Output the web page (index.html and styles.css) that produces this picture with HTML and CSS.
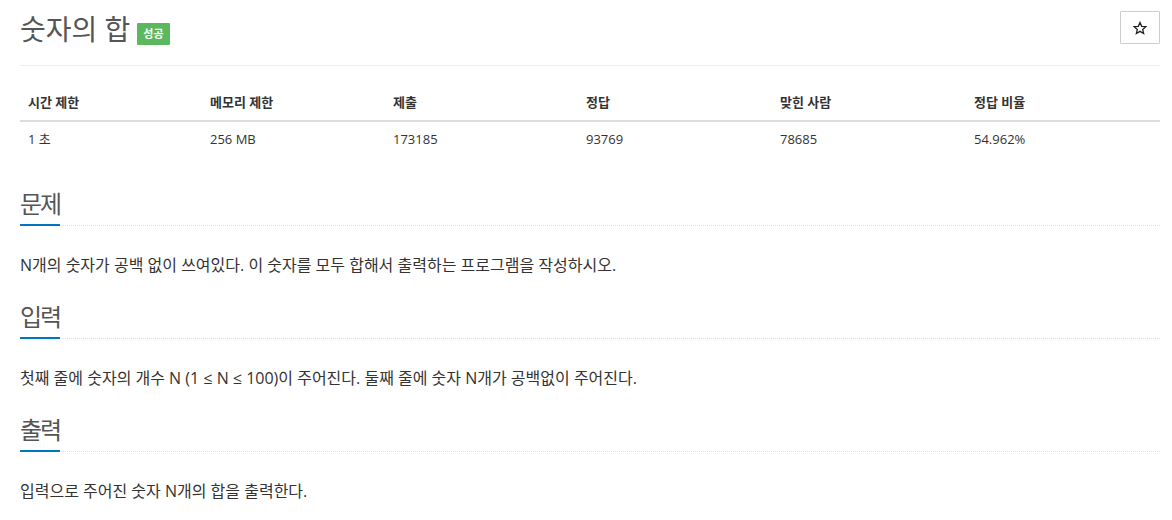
FILE: index.html
```html
<!DOCTYPE html>
<html lang="ko">
<head>
<meta charset="utf-8">
<title>숫자의 합</title>
<link rel="stylesheet" href="styles.css">
</head>
<body>
<div class="page">
  <div class="page-header">
    <h1 class="title">숫자의 합 <span class="label">성공</span></h1>
    <button class="star-btn" type="button" aria-label="즐겨찾기">
      <svg class="star-icon" width="14" height="14" viewBox="0 0 24 24"><path d="M12 2.5l2.9 6.6 7.1.6-5.4 4.7 1.6 7-6.2-3.7-6.2 3.7 1.6-7L2 9.7l7.1-.6z" fill="none" stroke="#222" stroke-width="2.2" stroke-linejoin="miter"/></svg>
    </button>
  </div>
  <table class="info">
    <colgroup>
      <col class="c1"><col class="c2"><col class="c3"><col class="c4"><col class="c5"><col class="c6">
    </colgroup>
    <thead>
      <tr><th>시간 제한</th><th>메모리 제한</th><th>제출</th><th>정답</th><th>맞힌 사람</th><th>정답 비율</th></tr>
    </thead>
    <tbody>
      <tr><td>1 초</td><td>256 MB</td><td>173185</td><td>93769</td><td>78685</td><td>54.962%</td></tr>
    </tbody>
  </table>
  <section class="section">
    <div class="headline"><h2>문제</h2></div>
    <p>N개의 숫자가 공백 없이 쓰여있다. 이 숫자를 모두 합해서 출력하는 프로그램을 작성하시오.</p>
  </section>
  <section class="section">
    <div class="headline"><h2>입력</h2></div>
    <p>첫째 줄에 숫자의 개수 N (1 ≤ N ≤ 100)이 주어진다. 둘째 줄에 숫자 N개가 공백없이 주어진다.</p>
  </section>
  <section class="section">
    <div class="headline"><h2>출력</h2></div>
    <p>입력으로 주어진 숫자 N개의 합을 출력한다.</p>
  </section>
</div>
</body>
</html>
```

FILE: styles.css
```css
* { box-sizing: border-box; }
html, body {
  margin: 0;
  padding: 0;
  background: #fff;
}
body {
  font-family: "Open Sans", "Noto Sans CJK KR", sans-serif;
  font-size: 14px;
  color: #333;
}
.page {
  padding: 0 12px 0 20px;
}
.page-header {
  display: flex;
  justify-content: space-between;
  align-items: flex-start;
  padding-top: 11px;
  padding-bottom: 18px;
  border-bottom: 1px solid #eee;
}
.title {
  margin: 0;
  font-size: 28px;
  font-weight: 400;
  line-height: 36px;
  color: #555;
  display: flex;
  align-items: center;
}
.label {
  display: inline-block;
  margin-left: 7px;
  margin-top: 9px;
  background: #5cb85c;
  color: #fff;
  font-size: 11px;
  font-weight: 700;
  line-height: 22px;
  padding: 0 6px;
  border-radius: 1px;
}
.star-btn {
  width: 40px;
  height: 33px;
  border: 1px solid #ccc;
  background: #fff;
  padding: 0;
  border-radius: 1px;
  display: flex;
  align-items: center;
  justify-content: center;
}
.star-icon {
  display: block;
}
.info {
  width: 100%;
  border-collapse: collapse;
  margin-top: 19px;
  font-size: 13px;
  table-layout: fixed;
}
.c1 { width: 182px; }
.c2 { width: 183px; }
.c3 { width: 193px; }
.c4 { width: 194px; }
.c5 { width: 194px; }
.info th, .info td {
  text-align: left;
  padding: 8px;
  line-height: 18.6px;
}
.info th {
  font-weight: 700;
  border-bottom: 2px solid #ddd;
}
.section {
  margin-top: 35px;
}
.section + .section {
  margin-top: 28px;
}
.headline {
  border-bottom: 1px dotted #ddd;
  height: 35px;
}
.headline h2 {
  display: inline-block;
  margin: 0;
  font-size: 24px;
  font-weight: 400;
  line-height: 26px;
  letter-spacing: -2px;
  color: #555;
  padding-bottom: 7px;
  border-bottom: 2px solid #0076c0;
}
.section p {
  margin: 28px 0 0;
  line-height: 22px;
  font-size: 16px;
}
```
